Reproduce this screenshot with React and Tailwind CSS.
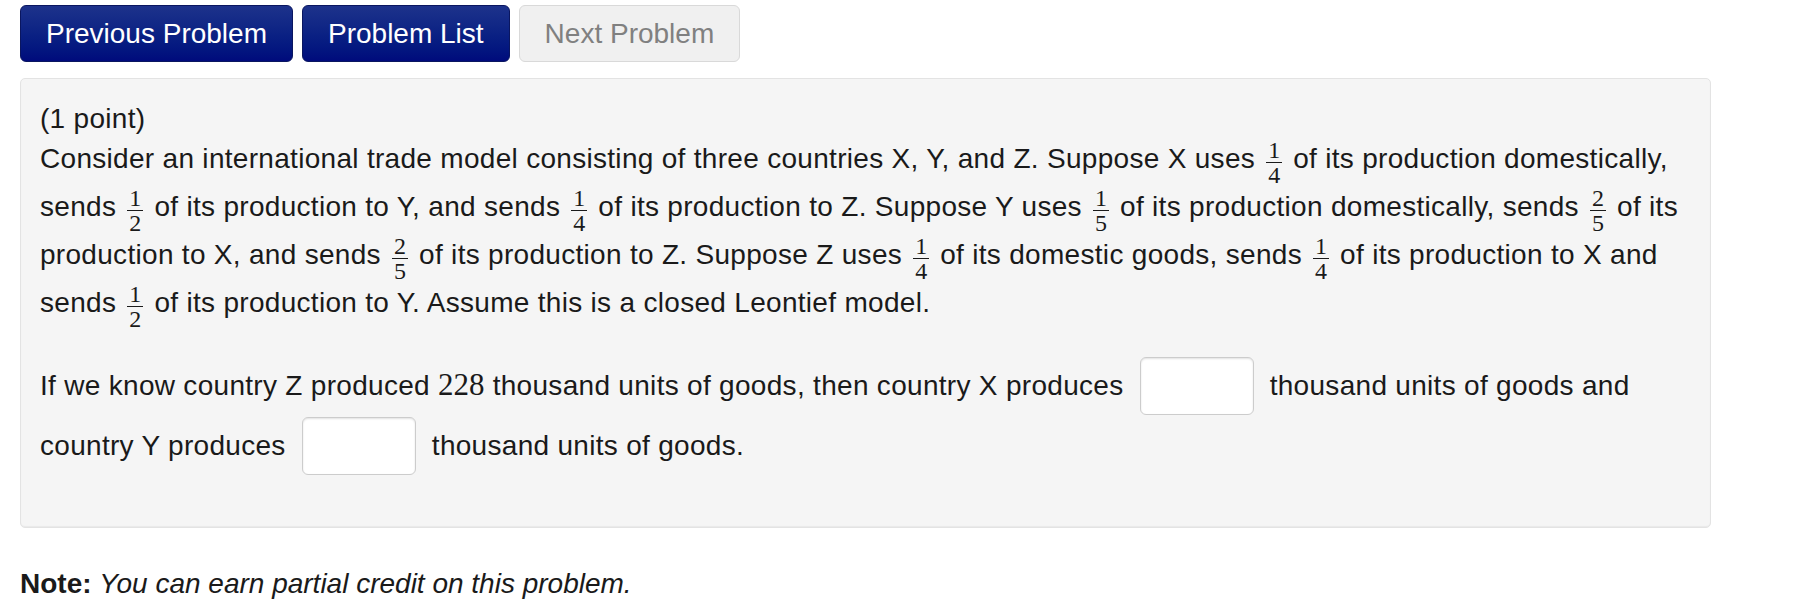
import React from 'react';

// MathJax-style inline fraction; numerator baseline raised so the bar sits near the math axis
const Frac = ({ n, d }) => (
  <span className="inline-flex flex-col items-center align-[10px] mx-[3px] font-['Liberation_Serif',serif] text-[24px] leading-[23px] tracking-normal">
    <span className="px-[2px]">{n}</span>
    <span className="w-full border-t-[1.5px] border-[#1a1a1a]" />
    <span className="px-[2px] pt-[1px]">{d}</span>
  </span>
);

const AnswerBox = () => (
  <input
    type="text"
    className="inline-block align-baseline w-[114px] h-[58px] mx-[8px] px-3 bg-white border border-[#cccccc] rounded-[6px] shadow-[inset_0_1px_2px_rgba(0,0,0,0.12)] text-[28px]"
  />
);

const navBtn =
  'h-[57px] px-[25px] rounded-[6px] border text-[28px] leading-none';

export default function App() {
  return (
    <div className="font-['Liberation_Sans',Arial,sans-serif] text-[28px] leading-[40px] text-[#1a1a1a] bg-white min-h-screen">
      {/* Navigation */}
      <div className="flex gap-[9px] pl-[20px] pt-[5px]">
        <button className={`${navBtn} border-[#0a1660] bg-linear-to-b from-[#1d328b] to-[#000a7c] text-white`}>
          Previous Problem
        </button>
        <button className={`${navBtn} border-[#0a1660] bg-linear-to-b from-[#1d328b] to-[#000a7c] text-white`}>
          Problem List
        </button>
        <button className={`${navBtn} border-[#d9d9d9] bg-[#f0f0f0] text-[#808080]`} disabled>
          Next Problem
        </button>
      </div>

      {/* Problem */}
      <div className="ml-[20px] mt-[16px] w-[1691px] bg-[#f5f5f5] border border-[#e3e3e3] rounded-[5px] px-[19px] pt-[20px] pb-[51px] tracking-[0.3px] shadow-[inset_0_-1px_1px_rgba(0,0,0,0.05)]">
        <div>(1 point)</div>
        <div className="whitespace-nowrap">
          Consider an international trade model consisting of three countries X, Y, and Z. Suppose X uses <Frac n="1" d="4" /> of its production domestically,
          <br />
          sends <Frac n="1" d="2" /> of its production to Y, and sends <Frac n="1" d="4" /> of its production to Z. Suppose Y uses <Frac n="1" d="5" /> of its production domestically, sends <Frac n="2" d="5" /> of its
          <br />
          production to X, and sends <Frac n="2" d="5" /> of its production to Z. Suppose Z uses <Frac n="1" d="4" /> of its domestic goods, sends <Frac n="1" d="4" /> of its production to X and
          <br />
          sends <Frac n="1" d="2" /> of its production to Y. Assume this is a closed Leontief model.
        </div>

        <div className="mt-[24px] leading-[60px] whitespace-nowrap">
          If we know country Z produced{' '}
          <span className="font-['Liberation_Serif',serif] text-[31px] tracking-normal">228</span> thousand units of goods, then country X produces <AnswerBox /> thousand units of goods and
          <br />
          country Y produces <AnswerBox /> thousand units of goods.
        </div>
      </div>

      <div className="pl-[20px] mt-[36px]">
        <span className="font-bold">Note:</span> <i>You can earn partial credit on this problem.</i>
      </div>
    </div>
  );
}
